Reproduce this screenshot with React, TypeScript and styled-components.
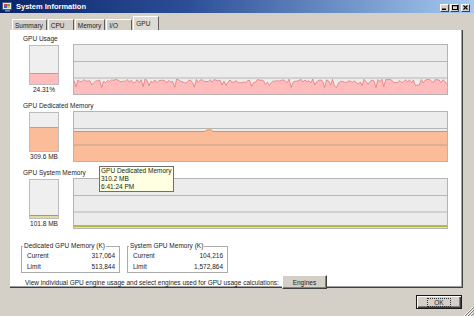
// Libraries
import React from "react";
import styled, { createGlobalStyle } from "styled-components";

/**
 * Page reset
 */
const GlobalStyle = createGlobalStyle`
  html, body {
    margin: 0;
    padding: 0;
    background: #d4d0c8;
  }
  body {
    font-family: "Liberation Sans", Arial, sans-serif;
  }
`;

/**
 * Outer window
 */
const Window = styled.div`
  width: 474px;
  height: 316px;
  background: #d4d0c8;
  display: flex;
  flex-direction: column;
  overflow: hidden;
  font-size: 6.5px;
  color: #1c1c1c;
`;

const TitleBar = styled.div`
  height: 13px;
  flex: none;
  display: flex;
  align-items: center;
  padding: 0 4px 0 2px;
  background: linear-gradient(90deg, #0a246a 0%, #2d4f98 40%, #a6caf0 100%);
`;

const TitleText = styled.span`
  color: #fff;
  font-weight: bold;
  font-size: 7.5px;
  margin-left: 3px;
  flex: 1;
`;

const CaptionButtons = styled.div`
  display: flex;
  gap: 1px;
  margin-top: 2px;
`;

const CaptionButton = styled.div<{ $gapLeft?: boolean }>`
  width: 9px;
  height: 8px;
  box-sizing: border-box;
  background: #d4d0c8;
  border-top: 1px solid #fff;
  border-left: 1px solid #fff;
  border-right: 1px solid #404040;
  border-bottom: 1px solid #404040;
  display: flex;
  align-items: center;
  justify-content: center;
  margin-left: ${props => (props.$gapLeft ? "1px" : "0")};
`;

/**
 * Tabs
 */
const TabStrip = styled.div`
  height: 17px;
  flex: none;
  display: flex;
  align-items: flex-end;
  padding-left: 12px;
  gap: 1px;
`;

const Tab = styled.div<{ $active?: boolean }>`
  height: ${props => (props.$active ? "14px" : "11px")};
  min-width: 26px;
  box-sizing: border-box;
  padding: 0 3px 0 2px;
  display: flex;
  align-items: center;
  background: ${props => (props.$active ? "#dedbd5" : "#d4d0c8")};
  border-top: 1px solid #fff;
  border-left: 1px solid #fff;
  border-right: 1px solid #606060;
`;

/**
 * White tab page
 */
const Panel = styled.div`
  position: relative;
  height: 258px;
  margin: 0 11px 0 10px;
  box-sizing: border-box;
  background: #fff;
  border-right: 1px solid #404040;
  border-bottom: 1px solid #404040;
  box-shadow: inset -1px -1px 0 #a0a0a0;
  padding: 4px 14px 0 11px;
  display: flex;
  flex-direction: column;
`;

const Section = styled.div`
  margin-bottom: 6px;
  &:last-of-type {
    margin-bottom: 0;
  }
`;

const SectionLabel = styled.div`
  line-height: 10px;
  height: 10px;
  margin-left: 2px;
`;

const GraphRow = styled.div`
  display: flex;
  height: 51px;
`;

const GaugeColumn = styled.div`
  width: 30px;
  margin-left: 8px;
  display: flex;
  flex-direction: column;
`;

const Gauge = styled.div`
  height: 40px;
  margin-top: 1px;
  box-sizing: border-box;
  border: 1px solid #bdbdbd;
  background: #efefef;
  display: flex;
  flex-direction: column;
  justify-content: flex-end;
`;

const GaugeFill = styled.div<{ $fill: string; $edge: string }>`
  background: ${props => props.$fill};
  border-top: 1px solid ${props => props.$edge};
`;

const GaugeValue = styled.div`
  text-align: center;
  line-height: 10px;
`;

const Chart = styled.div`
  flex: 1;
  margin-left: 14px;
  box-sizing: border-box;
  border: 1px solid #b4b4b4;
  background: #ececec;

  svg {
    display: block;
    width: 100%;
    height: 100%;
  }
`;

/**
 * Group boxes
 */
const GroupRow = styled.div`
  display: flex;
  gap: 7px;
  margin-top: 7px;
`;

const GroupBox = styled.fieldset<{ $width: number }>`
  width: ${props => props.$width}px;
  box-sizing: border-box;
  margin: 0;
  min-width: 0;
  padding: 0 4px 0 5px;
  border: 1px solid #ababab;
`;

const GroupTitle = styled.legend`
  padding: 0 1px;
  margin-left: -4px;
  line-height: 8px;
  font-size: 6.5px;
`;

const ValueRow = styled.div`
  display: flex;
  justify-content: space-between;
  line-height: 11px;
`;

const InfoRow = styled.div`
  display: flex;
  align-items: center;
  gap: 3px;
  margin-top: 2px;
  padding-left: 4px;
  height: 14px;
`;

const Button = styled.div<{ $width: number; $default?: boolean }>`
  width: ${props => props.$width}px;
  height: 14px;
  box-sizing: border-box;
  background: #d4d0c8;
  display: flex;
  align-items: center;
  justify-content: center;
  border: 1px solid;
  border-color: ${props => (props.$default ? "#1a1a1a" : "#fff #404040 #404040 #fff")};
  box-shadow: ${props =>
    props.$default
      ? "inset 1px 1px 0 #fff, inset -1px -1px 0 #404040, inset -2px -2px 0 #808080"
      : "inset -1px -1px 0 #808080"};
`;

const FocusLabel = styled.span`
  border: 1px dotted #303030;
  padding: 0 6px;
  line-height: 7px;
`;

const Tooltip = styled.div`
  position: absolute;
  left: 89px;
  top: 136px;
  min-width: 72px;
  box-sizing: border-box;
  white-space: nowrap;
  background: #ffffe1;
  border: 1px solid #6e6e6e;
  padding: 0 2px 0 1px;
  line-height: 8px;
`;

const Footer = styled.div`
  flex: 1;
  display: flex;
  justify-content: flex-end;
  padding-top: 7px;
`;

const Grip = styled.div`
  align-self: flex-end;
  width: 11px;
  height: 10px;
  margin-left: 1px;
`;

// Deterministic usage history
const usage = (() => {
  let s = 11;
  const rnd = () => {
    s = (s * 9301 + 49297) % 233280;
    return s / 233280;
  };
  const pts: number[] = [];
  for (let i = 0; i < 190; i++) {
    let v = 0.265 + (rnd() - 0.5) * 0.08;
    if (rnd() < 0.14) v = 0.13 + rnd() * 0.07;
    pts.push(v);
  }
  return pts;
})();

const W = 373;
const H = 49;

const linePath = (vals: number[]) =>
  vals
    .map((v, i) => `${i === 0 ? "M" : "L"}${((i * W) / (vals.length - 1)).toFixed(1)},${(H * (1 - v)).toFixed(1)}`)
    .join(" ");

const Grid = () => (
  <g stroke="#8c8c8c" strokeWidth={1} opacity={0.55}>
    <line x1={0} x2={W} y1={16.5} y2={16.5} />
    <line x1={0} x2={W} y1={33} y2={33} />
  </g>
);

const UsageChart = () => {
  const line = linePath(usage);
  return (
    <svg viewBox={`0 0 ${W} ${H}`} preserveAspectRatio="none">
      <path d={`${line} L${W},${H} L0,${H} Z`} fill="#ffbcbc" />
      <Grid />
      <path d={line} fill="none" stroke="#e27a7a" strokeWidth={0.8} />
    </svg>
  );
};

const DedicatedChart = () => {
  const line = `M0,19.5 L131,19.5 L133,18 L137,17.8 L139,19.5 L${W},19.5`;
  return (
    <svg viewBox={`0 0 ${W} ${H}`} preserveAspectRatio="none">
      <path d={`${line} L${W},${H} L0,${H} Z`} fill="#fbbd99" />
      <Grid />
      <path d={line} fill="none" stroke="#e68d57" strokeWidth={1} />
    </svg>
  );
};

const SystemChart = () => (
  <svg viewBox={`0 0 ${W} ${H}`} preserveAspectRatio="none">
    <rect x={0} y={46.5} width={W} height={2.5} fill="#e2e2a6" />
    <Grid />
    <line x1={0} x2={W} y1={47} y2={47} stroke="#a9a52c" strokeWidth={1.6} />
  </svg>
);

const AppIcon = () => (
  <svg width="11" height="11" viewBox="0 0 11 11">
    <rect x="0.5" y="1.5" width="9" height="7" fill="#dfe8f4" stroke="#4a5a7a" strokeWidth="1" />
    <rect x="2" y="3" width="3" height="2" fill="#e0403a" />
    <rect x="5" y="3" width="3" height="2" fill="#5bb040" />
    <rect x="2" y="5" width="3" height="2" fill="#3a6ad8" />
    <rect x="5" y="5" width="3" height="2" fill="#f2c21c" />
    <rect x="3" y="9" width="5" height="1.5" fill="#8090a8" />
  </svg>
);

const App = (): JSX.Element => {
  return (
    <>
      <GlobalStyle />
      <Window>
        <TitleBar>
          <AppIcon />
          <TitleText>System Information</TitleText>
          <CaptionButtons>
            <CaptionButton>
              <svg width="5" height="5" viewBox="0 0 5 5">
                <rect x="0" y="3.5" width="4" height="1.5" fill="#000" />
              </svg>
            </CaptionButton>
            <CaptionButton>
              <svg width="6" height="5" viewBox="0 0 6 5">
                <rect x="0.5" y="0.5" width="5" height="4" fill="none" stroke="#000" strokeWidth="1" />
                <rect x="0" y="0" width="6" height="1.2" fill="#000" />
              </svg>
            </CaptionButton>
            <CaptionButton $gapLeft>
              <svg width="5" height="5" viewBox="0 0 5 5">
                <path d="M0.5 0.5 L4.5 4.5 M4.5 0.5 L0.5 4.5" stroke="#000" strokeWidth="1.1" />
              </svg>
            </CaptionButton>
          </CaptionButtons>
        </TitleBar>

        <TabStrip>
          <Tab>Summary</Tab>
          <Tab>CPU</Tab>
          <Tab>Memory</Tab>
          <Tab>I/O</Tab>
          <Tab $active>GPU</Tab>
        </TabStrip>

        <Panel>
          <Section>
            <SectionLabel>GPU Usage</SectionLabel>
            <GraphRow>
              <GaugeColumn>
                <Gauge>
                  <GaugeFill $fill="#ffbcbc" $edge="#e88a8a" style={{ height: "26%" }} />
                </Gauge>
                <GaugeValue>24.31%</GaugeValue>
              </GaugeColumn>
              <Chart>
                <UsageChart />
              </Chart>
            </GraphRow>
          </Section>

          <Section>
            <SectionLabel>GPU Dedicated Memory</SectionLabel>
            <GraphRow>
              <GaugeColumn>
                <Gauge>
                  <GaugeFill $fill="#fbbd99" $edge="#e8935f" style={{ height: `${(309.6 / 513.8) * 100}%` }} />
                </Gauge>
                <GaugeValue>309.6 MB</GaugeValue>
              </GaugeColumn>
              <Chart>
                <DedicatedChart />
              </Chart>
            </GraphRow>
          </Section>

          <Section>
            <SectionLabel>GPU System Memory</SectionLabel>
            <GraphRow>
              <GaugeColumn>
                <Gauge>
                  <GaugeFill $fill="#dedca0" $edge="#aaa630" style={{ height: "2px" }} />
                </Gauge>
                <GaugeValue>101.8 MB</GaugeValue>
              </GaugeColumn>
              <Chart>
                <SystemChart />
              </Chart>
            </GraphRow>
          </Section>

          <GroupRow>
            <GroupBox $width={99}>
              <GroupTitle>Dedicated GPU Memory (K)</GroupTitle>
              <ValueRow>
                <span>Current</span>
                <span>317,064</span>
              </ValueRow>
              <ValueRow>
                <span>Limit</span>
                <span>513,844</span>
              </ValueRow>
            </GroupBox>
            <GroupBox $width={101}>
              <GroupTitle>System GPU Memory (K)</GroupTitle>
              <ValueRow>
                <span>Current</span>
                <span>104,216</span>
              </ValueRow>
              <ValueRow>
                <span>Limit</span>
                <span>1,572,864</span>
              </ValueRow>
            </GroupBox>
          </GroupRow>

          <InfoRow>
            <span>View individual GPU engine usage and select engines used for GPU usage calculations:</span>
            <Button $width={45}>Engines</Button>
          </InfoRow>

          <Tooltip>
            <div>GPU Dedicated Memory</div>
            <div>310.2 MB</div>
            <div>6:41:24 PM</div>
          </Tooltip>
        </Panel>

        <Footer>
          <Button $width={46} $default>
            <FocusLabel>OK</FocusLabel>
          </Button>
          <Grip>
            <svg width="11" height="10" viewBox="0 0 11 10">
              <g stroke="#fff" strokeWidth="1">
                <line x1="10" y1="1" x2="1" y2="10" />
                <line x1="10" y1="4" x2="4" y2="10" />
                <line x1="10" y1="7" x2="7" y2="10" />
              </g>
              <g stroke="#808080" strokeWidth="1">
                <line x1="11" y1="1" x2="2" y2="10" />
                <line x1="11" y1="4" x2="5" y2="10" />
                <line x1="11" y1="7" x2="8" y2="10" />
              </g>
            </svg>
          </Grip>
        </Footer>
      </Window>
    </>
  );
};

export default App;
